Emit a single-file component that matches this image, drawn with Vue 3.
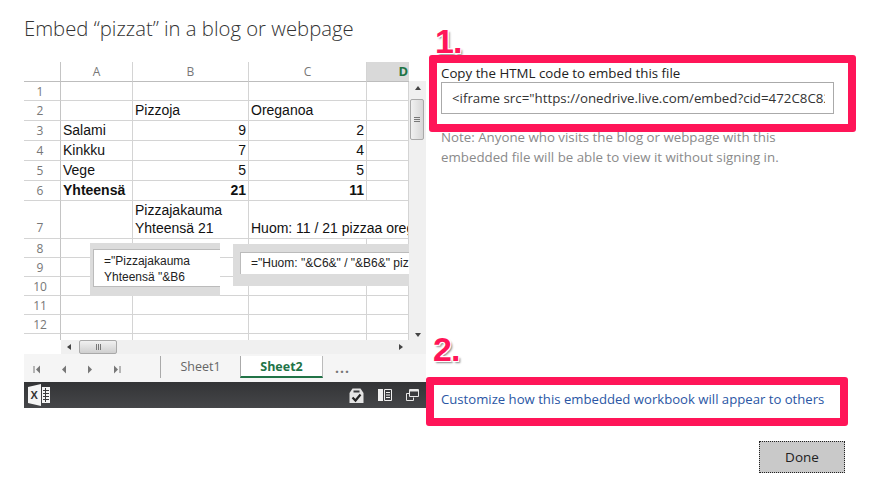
<script setup>
const columns = ['A', 'B', 'C', 'D']

const rows = [
  { n: 1, h: 19, cells: ['', '', '', ''] },
  { n: 2, h: 20, cells: ['', 'Pizzoja', 'Oreganoa', ''] },
  { n: 3, h: 20, cells: ['Salami', '9', '2', ''] },
  { n: 4, h: 20, cells: ['Kinkku', '7', '4', ''] },
  { n: 5, h: 20, cells: ['Vege', '5', '5', ''] },
  { n: 6, h: 20, bold: true, cells: ['Yhteensä', '21', '11', ''] },
]

const lowerRows = [
  { n: 8, h: 19 },
  { n: 9, h: 19 },
  { n: 10, h: 19 },
  { n: 11, h: 19 },
  { n: 12, h: 19 },
]

const isNumber = (val) => /^\d+$/.test(val)
</script>

<template>
  <div class="page">
    <section class="left">
      <h1 class="title">Embed “pizzat” in a blog or webpage</h1>
      <div class="viewer">
        <div class="sheet-area">
          <div class="sheet">
            <div class="head corner"></div>
            <div
              v-for="col in columns"
              :key="col"
              class="head"
              :class="{ 'head--active': col === 'D' }"
            >
              {{ col }}
            </div>

            <template v-for="row in rows" :key="row.n">
              <div class="num" :style="{ height: row.h + 'px' }">{{ row.n }}</div>
              <div
                v-for="(cell, i) in row.cells"
                :key="i"
                class="cell"
                :class="{ 'cell--num': isNumber(cell), 'cell--bold': row.bold }"
              >
                {{ cell }}
              </div>
            </template>

            <div class="num num--tall">7</div>
            <div class="cell"></div>
            <div class="cell cell--wrap">Pizzajakauma<br />Yhteensä 21</div>
            <div class="cell cell--wide">Huom: 11 / 21 pizzaa oreg</div>

            <template v-for="row in lowerRows" :key="row.n">
              <div class="num" :style="{ height: row.h + 'px' }">{{ row.n }}</div>
              <div v-for="col in columns" :key="col" class="cell"></div>
            </template>

            <div class="num num--end"></div>
            <div v-for="col in columns" :key="col" class="cell cell--end"></div>

            <div class="formula formula--one">
              <div class="formula__box">="Pizzajakauma<br />Yhteensä "&amp;B6</div>
            </div>
            <div class="formula formula--two">
              <div class="formula__box">="Huom: "&amp;C6&amp;" / "&amp;B6&amp;" piz</div>
            </div>
          </div>

          <div class="vscroll">
            <span class="arrow arrow--up"></span>
            <div class="vscroll__thumb"><i></i><i></i><i></i></div>
            <span class="arrow arrow--down"></span>
          </div>
        </div>

        <div class="hscroll">
          <span class="arrow arrow--left"></span>
          <div class="hscroll__thumb"><i></i><i></i><i></i></div>
          <span class="arrow arrow--right"></span>
        </div>

        <div class="tabs">
          <div class="tabs__nav">
            <svg width="8" height="9" viewBox="0 0 8 9"><path d="M1 1v7" stroke="#777" /><path d="M7 0.5v8L3 4.500z" fill="#777" /></svg>
            <svg width="6" height="9" viewBox="0 0 6 9"><path d="M5 0.500v8L1 4.500z" fill="#777" /></svg>
            <svg width="6" height="9" viewBox="0 0 6 9"><path d="M1 0.500v8L5 4.500z" fill="#777" /></svg>
            <svg width="8" height="9" viewBox="0 0 8 9"><path d="M7 1v7" stroke="#777" /><path d="M1 0.500v8L5 4.500z" fill="#777" /></svg>
          </div>
          <div class="tab">Sheet1</div>
          <div class="tab tab--active">Sheet2</div>
          <div class="tabs__more">...</div>
        </div>

        <div class="statusbar">
          <svg class="xl" width="22" height="22" viewBox="0 0 22 22">
            <path d="M0 3l13-3v22L0 19z" fill="#f4f4f4" />
            <text x="2.500" y="14.500" class="xl__x">X</text>
            <path d="M14 3h8v16h-8z" fill="#f4f4f4" />
            <path d="M15 6.500h6M15 9.500h6M15 12.500h6M15 15.500h6M17.500 4v14" stroke="#3a3b3d" stroke-width="1" />
          </svg>
          <div class="statusbar__icons">
            <svg width="15" height="15" viewBox="0 0 15 15">
              <path d="M0.500 5l3-4.500h8l3 4.500v10H0.500z" fill="#e4e4e4" />
              <path d="M4.500 2.500h6v2h-6z" fill="#3a3b3d" />
              <path d="M3.500 9.500l3 3L11.500 6.500" fill="none" stroke="#222" stroke-width="2.200" />
            </svg>
            <svg width="14" height="12" viewBox="0 0 14 12">
              <path d="M0 0h5v12H0z" fill="#f1f1f1" />
              <path d="M6.500 0.500h7v11h-7z" fill="none" stroke="#f1f1f1" />
              <path d="M8 3.500h4M8 6h4M8 8.500h4" stroke="#f1f1f1" />
            </svg>
            <svg width="13" height="12" viewBox="0 0 13 12">
              <path d="M3.500 0.500h9v7h-9z" fill="none" stroke="#e8e8e8" />
              <path d="M3.500 1h9v1.500h-9z" fill="#e8e8e8" />
              <path d="M3.500 4.500H0.500v7h7v-3" fill="none" stroke="#e8e8e8" />
            </svg>
          </div>
        </div>
      </div>
    </section>

    <section class="right">
      <div class="step step--one">1.</div>
      <div class="callout callout--one">
        <label class="callout__label">Copy the HTML code to embed this file</label>
        <div class="code"><span class="code__text">&lt;iframe src="https://onedrive.live.com/embed?cid=472C8C82</span></div>
      </div>
      <p class="note">
        Note: Anyone who visits the blog or webpage with this<br />
        embedded file will be able to view it without signing in.
      </p>
      <div class="step step--two">2.</div>
      <div class="callout callout--two">
        <a class="link">Customize how this embedded workbook will appear to others</a>
      </div>
      <button class="done">Done</button>
    </section>
  </div>
</template>

<style scoped>
.page {
  width: 887px;
  height: 484px;
  display: flex;
  overflow: hidden;
  background: #fff;
  font-family: 'Open Sans', sans-serif;
  color: #222;
}
.left {
  width: 402px;
  margin-left: 24px;
  flex: none;
}
.title {
  margin: 16px 0 0;
  height: 46px;
  font-size: 20.300px;
  line-height: 25px;
  font-weight: 300;
  color: #333;
  white-space: nowrap;
}
.viewer {
  width: 402px;
}
.sheet-area {
  display: flex;
  height: 278px;
}
.sheet {
  position: relative;
  width: 385px;
  height: 278px;
  overflow: hidden;
  display: grid;
  grid-template-columns: 37px 72px 116px 118px 42px;
  grid-auto-rows: min-content;
  font-family: 'Liberation Sans', Arial, sans-serif;
  font-size: 14px;
  color: #111;
}
.head {
  height: 19px;
  border-right: 1px solid #d4d4d4;
  border-bottom: 1px solid #bdbdbd;
  box-sizing: content-box;
  font-family: 'Open Sans', sans-serif;
  font-size: 12px;
  line-height: 19px;
  color: #777;
  text-align: center;
}
.corner {
  border-right-color: #c4c4c4;
}
.head--active {
  background: #d9d9d9;
  border-right: none;
  color: #217346;
  font-weight: 700;
  font-size: 13px;
  text-align: right;
  padding-right: 1px;
}
.num {
  box-sizing: border-box;
  border-bottom: 1px solid #d4d4d4;
  border-right: 1px solid #c4c4c4;
  font-family: 'Open Sans', sans-serif;
  font-size: 12px;
  line-height: 19px;
  color: #777;
  text-align: center;
  padding-right: 4px;
}
.num--tall {
  height: 38px;
  padding-top: 17px;
}
.num--end {
  height: 7px;
  border-bottom: none;
}
.cell {
  box-sizing: border-box;
  border-right: 1px solid #d4d4d4;
  border-bottom: 1px solid #d4d4d4;
  padding: 0 2px 0 2px;
  line-height: 18px;
  white-space: nowrap;
}
.cell--num {
  text-align: right;
}
.cell--bold {
  font-weight: 700;
}
.cell--wrap {
  line-height: 18px;
}
.cell--wide {
  grid-column: span 2;
  padding-top: 18px;
  overflow: hidden;
}
.cell--end {
  height: 7px;
  padding: 0;
  border-bottom: none;
}
.formula {
  position: absolute;
  background: #dcdcdc;
  font-size: 12px;
  color: #222;
}
.formula--one {
  left: 66px;
  top: 181px;
  width: 130px;
  height: 53px;
  padding: 6px 0 0 3px;
  box-sizing: border-box;
}
.formula--two {
  left: 209px;
  top: 182px;
  width: 176px;
  height: 42px;
  padding: 8px 0 0 7px;
  box-sizing: border-box;
}
.formula__box {
  background: #fff;
  white-space: nowrap;
  overflow: hidden;
  border-left: 1px solid #bbb;
  border-top: 1px solid #bbb;
  line-height: 16px;
}
.formula--one .formula__box {
  height: 38px;
  padding: 3px 0 0 10px;
  box-sizing: border-box;
  border-bottom: 1px solid #bbb;
}
.formula--two .formula__box {
  height: 22px;
  padding: 2px 0 0 10px;
  box-sizing: border-box;
}
.vscroll {
  width: 17px;
  margin-top: 19px;
  background: #f0f0f0;
  display: flex;
  flex-direction: column;
  align-items: center;
  position: relative;
}
.vscroll__thumb {
  position: absolute;
  top: 18px;
  left: 1px;
  width: 14px;
  height: 41px;
  box-sizing: border-box;
  border: 1px solid #a9a9a9;
  border-radius: 2px;
  background: linear-gradient(90deg, #f1f1f1, #d6d6d6);
  display: flex;
  flex-direction: column;
  justify-content: center;
  align-items: center;
  gap: 1px;
}
.vscroll__thumb i {
  display: block;
  width: 6px;
  height: 1px;
  background: #777;
}
.arrow {
  width: 0;
  height: 0;
  border: 3px solid transparent;
}
.arrow--up {
  position: absolute;
  top: 5px;
  border-top: none;
  border-bottom: 4px solid #444;
}
.arrow--down {
  position: absolute;
  bottom: 3px;
  border-bottom: none;
  border-top: 4px solid #444;
}
.hscroll {
  height: 14px;
  margin-left: 37px;
  background: #f0f0f0;
  display: flex;
  align-items: center;
  position: relative;
}
.hscroll__thumb {
  position: absolute;
  left: 18px;
  top: 0;
  width: 38px;
  height: 14px;
  box-sizing: border-box;
  border: 1px solid #a9a9a9;
  border-radius: 2px;
  background: linear-gradient(#f1f1f1, #cfcfcf);
  display: flex;
  justify-content: center;
  align-items: center;
  gap: 1px;
}
.hscroll__thumb i {
  display: block;
  width: 1px;
  height: 6px;
  background: #777;
}
.arrow--left {
  position: absolute;
  left: 6px;
  border-left: none;
  border-right: 4px solid #444;
}
.arrow--right {
  position: absolute;
  left: 338px;
  border-right: none;
  border-left: 4px solid #444;
}
.tabs {
  height: 28px;
  background: #f5f5f5;
  display: flex;
  font-size: 12.500px;
  box-sizing: border-box;
  padding-top: 2px;
}
.tabs__nav {
  width: 136px;
  box-sizing: border-box;
  padding: 6px 0 0 9px;
  display: flex;
  gap: 20px;
  align-items: flex-start;
}
.tabs__nav svg {
  flex: none;
  margin-top: 3px;
}
.tab {
  width: 80px;
  height: 22px;
  box-sizing: border-box;
  border-left: 1px solid #aaa;
  text-align: center;
  line-height: 22px;
  color: #666;
}
.tab--active {
  width: 83px;
  height: 22px;
  background: #fff;
  color: #217346;
  font-weight: 700;
  border-right: 1px solid #bbb;
  border-bottom: 2px solid #217346;
}
.tabs__more {
  margin-left: 12px;
  color: #777;
  font-weight: 700;
  font-size: 14px;
  line-height: 24px;
  letter-spacing: 1px;
}
.statusbar {
  height: 26px;
  background: linear-gradient(#333436, #454649);
  display: flex;
  align-items: center;
  justify-content: space-between;
  padding: 0 7px 0 4px;
}
.xl {
  flex: none;
}
.xl__x {
  font-family: 'Liberation Sans', sans-serif;
  font-size: 11px;
  font-weight: 700;
  fill: #333;
}
.statusbar__icons {
  display: flex;
  align-items: center;
  gap: 14px;
}
.right {
  width: 430px;
  margin-left: 3px;
  flex: none;
  display: flex;
  flex-direction: column;
  align-items: flex-start;
}
.step {
  font-family: 'Liberation Sans', Arial, sans-serif;
  font-size: 34px;
  line-height: 30px;
  font-weight: 700;
  letter-spacing: -1px;
  color: #ff1558;
  text-shadow: -1px -1px 0 #fff, 1px -1px 0 #fff, -1px 1px 0 #fff, 1px 1px 0 #fff, 2px 2px 2px #888;
}
.step--one {
  margin: 26px 0 -1px 6px;
}
.step--two {
  margin: 157px 0 13px 4px;
}
.callout {
  box-sizing: border-box;
  border: 8px solid #ff1558;
  border-radius: 3px;
  background: #fff;
}
.callout--one {
  width: 427px;
  height: 77px;
  padding: 1px 0 0 4px;
}
.callout__label {
  display: block;
  font-size: 13.300px;
  line-height: 18px;
  color: #222;
}
.code {
  box-sizing: border-box;
  width: 393px;
  height: 32px;
  padding: 0 8px 0 10px;
  border: 1px solid #aaa;
  font-size: 13.300px;
  line-height: 31px;
  color: #333;
}
.code__text {
  display: block;
  overflow: hidden;
  white-space: nowrap;
}
.note {
  margin: -5px 0 0 12px;
  height: 50px;
  font-size: 13.300px;
  line-height: 20px;
  color: #8a8a8a;
}
.callout--two {
  width: 422px;
  height: 49px;
  margin-left: -3px;
  padding: 2px 0 0 7px;
}
.link {
  font-size: 13.150px;
  line-height: 20px;
  color: #2a56a4;
  white-space: nowrap;
}
.done {
  align-self: flex-start;
  margin: 15px 0 0 330px;
  width: 86px;
  height: 32px;
  background: #c9c9c9;
  border: 1px dotted #222;
  font-family: 'Open Sans', sans-serif;
  font-size: 13.500px;
  font-weight: 500;
  color: #222;
}
</style>
